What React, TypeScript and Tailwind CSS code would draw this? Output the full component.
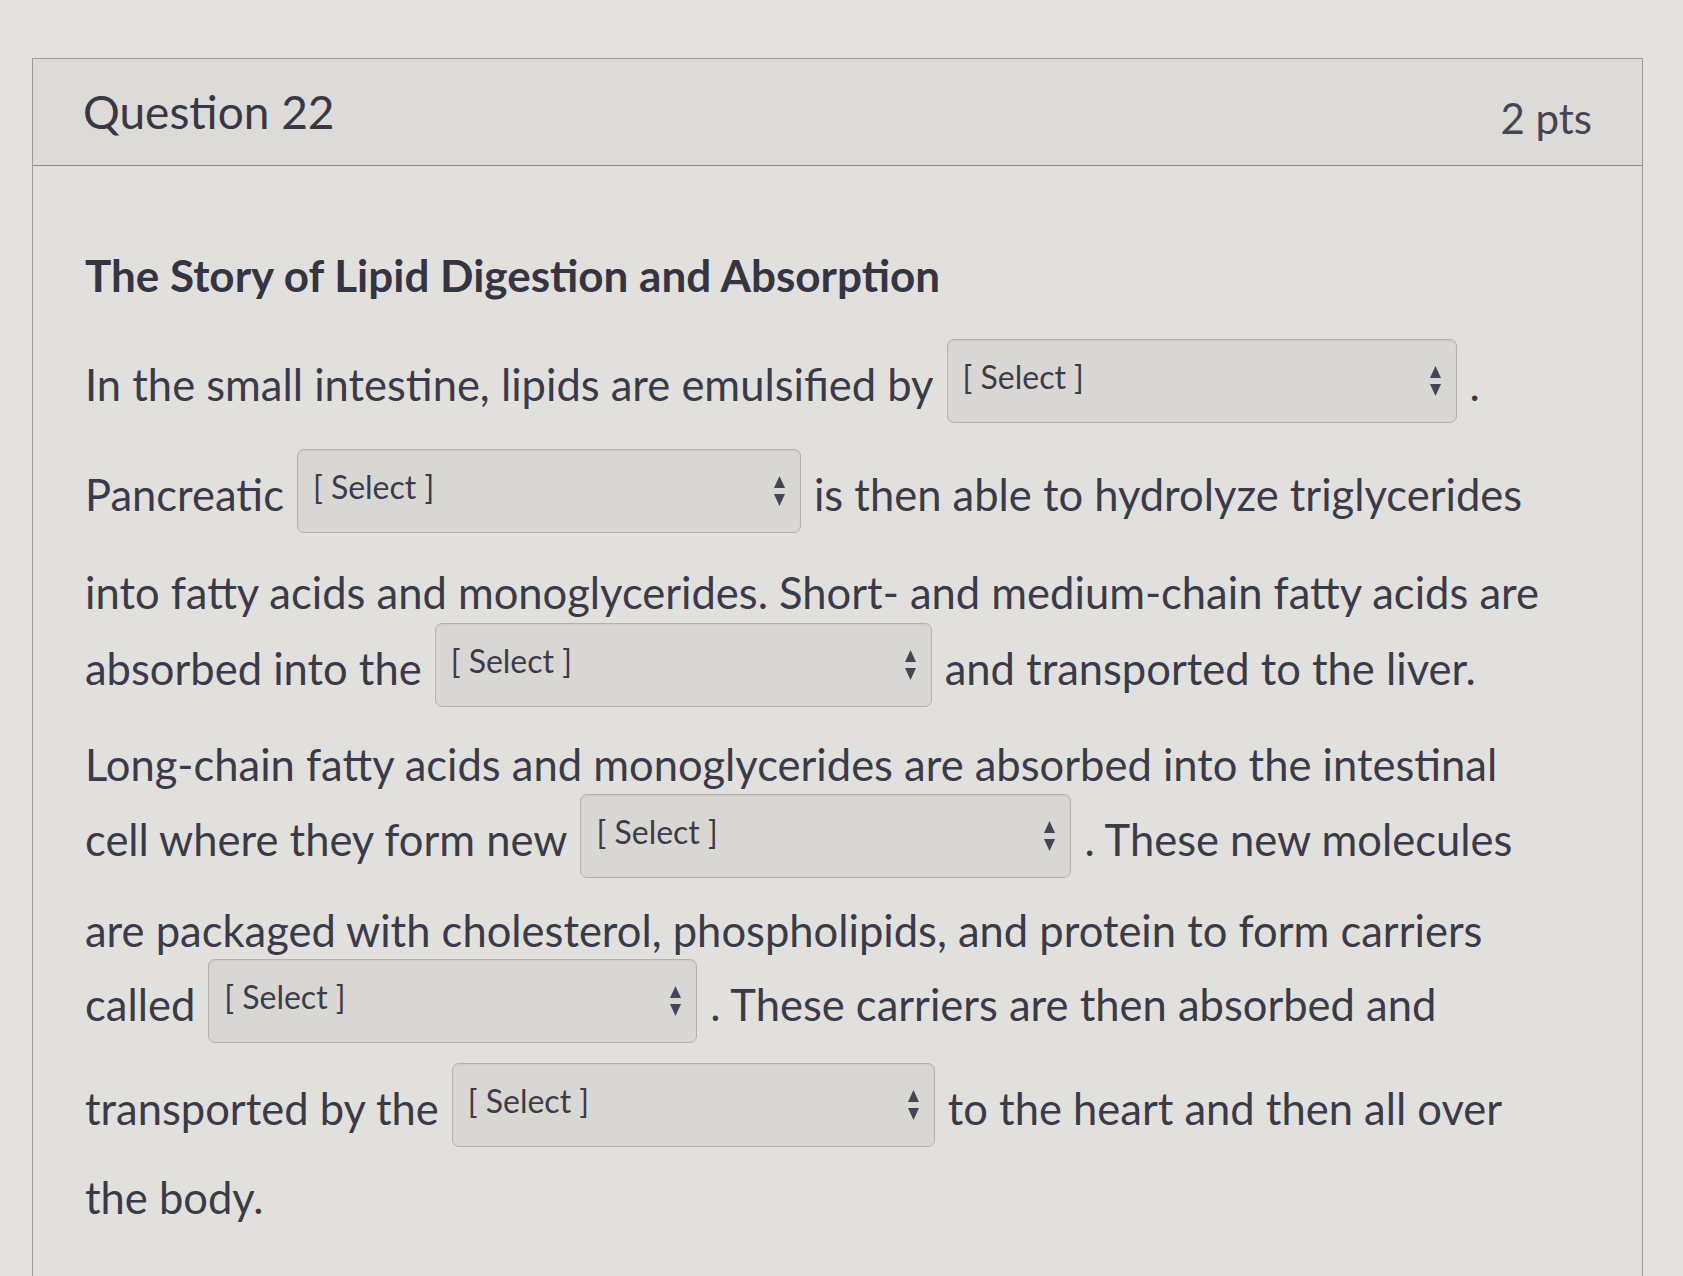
const font = { fontFamily: 'Lato, "Open Sans", sans-serif' };

function SelectBox({ width }: { width: string }) {
  return (
    <div
      className={`${width} h-[84px] flex-shrink-0 flex items-center justify-between pl-[15px] pr-[15px] bg-[#d9d7d3] border border-[#b4b2ae] rounded-[7px] shadow-[inset_0_1px_2px_rgba(0,0,0,0.06)]`}
    >
      <span className="text-[32px] leading-none text-[#3d3b4a] -mt-2">[ Select ]</span>
      <svg className="w-[11px] h-[30px]" viewBox="0 0 11 30" fill="#474555">
        <path d="M0 12 L5.5 0 L11 12 Z" />
        <path d="M0 18 L11 18 L5.5 30 Z" />
      </svg>
    </div>
  );
}

function Txt({ children }: { children: React.ReactNode }) {
  return <span className="pt-2 whitespace-nowrap">{children}</span>;
}

export default function App() {
  return (
    <div className="h-[1276px] overflow-hidden bg-[#e4e2de] pt-[58px] pl-[32px] pr-[40px]" style={font}>
      <div className="border border-[#9d9b97] bg-[#e2e0dc] pb-[120px]">
        {/* Header */}
        <div className="h-[107px] flex items-center justify-between px-[50px] bg-[#dddbd7] border-b border-[#8f8d89]">
          <h2 className="text-[46px] leading-none text-[#393746]">Question 22</h2>
          <span className="text-[42px] leading-none text-[#464456] mt-3">2 pts</span>
        </div>

        {/* Body */}
        <div className="px-[52px] text-[43.5px] text-[#3b3a4a]">
          <h3 className="mt-[87px] text-[44px] leading-none font-bold text-[#353442]">
            The Story of Lipid Digestion and Absorption
          </h3>

          <div className="mt-[42px] h-[84px] flex items-center gap-[13px]">
            <Txt>In the small intestine, lipids are emulsified by</Txt>
            <SelectBox width="w-[510px]" />
            <Txt>.</Txt>
          </div>

          <div className="mt-[26px] h-[84px] flex items-center gap-[13px]">
            <Txt>Pancreatic</Txt>
            <SelectBox width="w-[504px]" />
            <Txt>is then able to hydrolyze triglycerides</Txt>
          </div>

          <p className="mt-[37px] leading-[44px] whitespace-nowrap">
            into fatty acids and monoglycerides. Short- and medium-chain fatty acids are
          </p>

          <div className="mt-[9px] h-[84px] flex items-center gap-[13px]">
            <Txt>absorbed into the</Txt>
            <SelectBox width="w-[497px]" />
            <Txt>and transported to the liver.</Txt>
          </div>

          <p className="mt-[35px] leading-[44px] whitespace-nowrap">
            Long-chain fatty acids and monoglycerides are absorbed into the intestinal
          </p>

          <div className="mt-[8px] h-[84px] flex items-center gap-[13px]">
            <Txt>cell where they form new</Txt>
            <SelectBox width="w-[491px]" />
            <Txt>. These new molecules</Txt>
          </div>

          <p className="mt-[30px] leading-[44px] whitespace-nowrap">
            are packaged with cholesterol, phospholipids, and protein to form carriers
          </p>

          <div className="mt-[7px] h-[84px] flex items-center gap-[13px]">
            <Txt>called</Txt>
            <SelectBox width="w-[489px]" />
            <Txt>. These carriers are then absorbed and</Txt>
          </div>

          <div className="mt-[20px] h-[84px] flex items-center gap-[13px]">
            <Txt>transported by the</Txt>
            <SelectBox width="w-[483px]" />
            <Txt>to the heart and then all over</Txt>
          </div>

          <p className="mt-[28px] leading-[44px] whitespace-nowrap">the body.</p>
        </div>
      </div>
    </div>
  );
}
